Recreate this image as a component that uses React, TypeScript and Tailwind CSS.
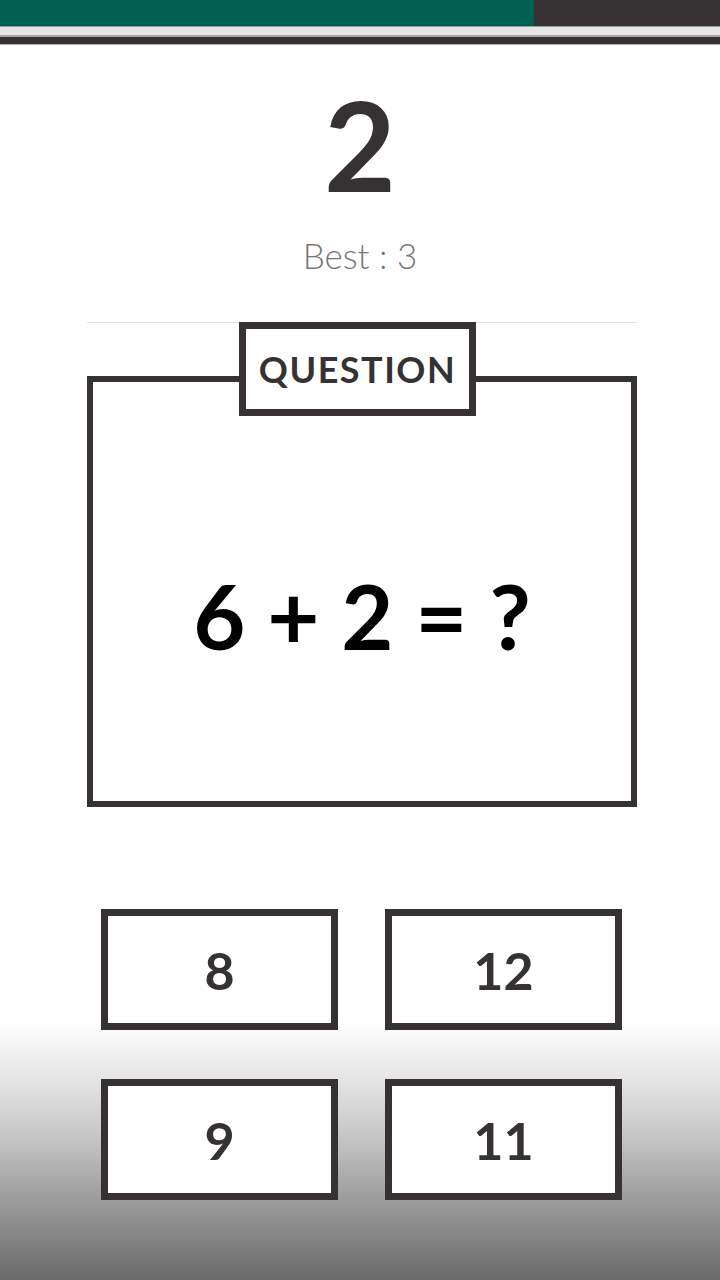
import React from "react";

const font = { fontFamily: "Lato, 'Noto Sans', 'DejaVu Sans', sans-serif" };

function Answer({ value }: { value: string }) {
  return (
    <div className="w-[237px] h-[121px] border-[7px] border-[#363233] bg-white flex items-center justify-center">
      <span className="text-[52px] leading-none font-bold text-[#363233]">{value}</span>
    </div>
  );
}

export default function App() {
  return (
    <div
      style={font}
      className="w-[720px] h-[1280px] overflow-hidden flex flex-col bg-[linear-gradient(to_bottom,#ffffff_0px,#ffffff_1020px,#f2f2f2_1050px,#e2e2e2_1085px,#c4c4c4_1140px,#a2a2a2_1190px,#6a6a6a_1280px)]"
    >
      {/* top progress bar */}
      <div className="flex h-[26px]">
        <div className="w-[534px] bg-[#006152]" />
        <div className="flex-1 bg-[#363233]" />
      </div>
      <div className="h-px bg-[#9a9a9a]" />
      <div className="h-[8px] bg-[#e6e6e6]" />
      <div className="h-[2px] bg-[#a8a8a8]" />
      <div className="h-[7px] bg-[#363233]" />
      <div className="h-px bg-[#b0b0b0]" />

      {/* score */}
      <div className="mt-[37px] text-center text-[124px] leading-none font-bold text-[#363233]">2</div>
      <div className="mt-[32px] text-center text-[35px] leading-none font-light text-[#777777]">Best : 3</div>

      {/* question area */}
      <div className="mt-[49px] ml-[87px] w-[550px] flex flex-col">
        <div className="h-px bg-[#e4e4e4]" />
        <div className="relative z-10 -mt-[1px] ml-[152px] w-[237px] h-[94px] border-[7px] border-[#363233] bg-white flex items-center justify-center">
          <span className="text-[36px] leading-none font-bold tracking-[1.5px] text-[#363233]">QUESTION</span>
        </div>
        <div className="-mt-[40px] h-[431px] border-[6px] border-[#363233] bg-white flex items-center justify-center pt-[47px]">
          <span className="text-[90px] leading-none font-bold text-black">6 + 2 = ?</span>
        </div>
      </div>

      {/* answers */}
      <div className="mt-[102px] ml-[101px] grid grid-cols-[237px_237px] gap-x-[47px] gap-y-[49px]">
        <Answer value="8" />
        <Answer value="12" />
        <Answer value="9" />
        <Answer value="11" />
      </div>
    </div>
  );
}
